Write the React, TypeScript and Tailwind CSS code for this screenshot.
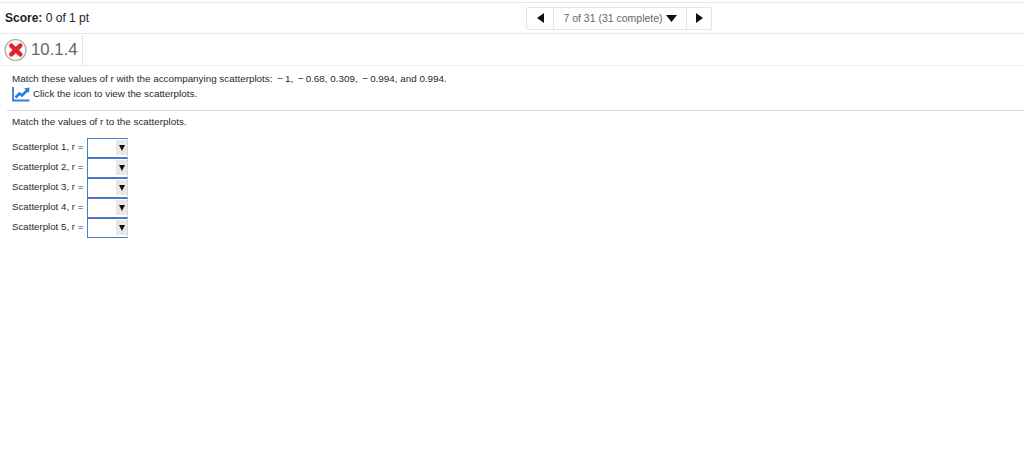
import React from "react";

const plots = [1, 2, 3, 4, 5];

const Triangle = ({ dir }: { dir: "left" | "right" | "down" }) => {
  const points = dir === "left" ? "7,0 7,10 0,5" : dir === "right" ? "0,0 0,10 7,5" : "0,0 11,0 5.5,7";
  const w = dir === "down" ? 11 : 7;
  const h = dir === "down" ? 7 : 10;
  return (
    <svg width={w} height={h} viewBox={`0 0 ${w} ${h}`} className="block">
      <polygon points={points} fill="#111" />
    </svg>
  );
};

const WrongIcon = () => (
  <svg width="23" height="24" viewBox="0 0 23 24" className="block">
    <circle cx="11.5" cy="12" r="10.5" fill="#fbf8f8" stroke="#a8a8a8" strokeWidth="1.2" />
    <path d="M7.3 7.6 L16.3 16.4 M16.3 7.6 L7.3 16.4" stroke="#e0212f" strokeWidth="4.4" strokeLinecap="round" />
  </svg>
);

const ChartIcon = () => (
  <svg width="18" height="15" viewBox="0 0 18 15" className="block">
    <path d="M1 0 V13.5 H17.5" fill="none" stroke="#2a7de1" strokeWidth="1.8" />
    <path d="M3.5 10.5 L7.5 6.5 L10 8.5 L15 3.5" fill="none" stroke="#2a7de1" strokeWidth="2.6" />
    <path d="M12 1.5 L17.5 0.5 L17 6 Z" fill="#2a7de1" />
  </svg>
);

const Minus = () => <span className="mx-[2px]">−</span>;

export default function App() {
  return (
    <div className="h-[456px] w-[1024px] overflow-hidden bg-white pt-[2px] font-['Liberation_Sans',Arial,sans-serif] text-[#333]">
      <header className="flex h-[32px] items-center border-y border-[#e8e8ee] pl-[5px]">
        <div className="w-[521px] text-[12px] text-[#222]">
          <span className="font-bold">Score:</span> 0 of 1 pt
        </div>
        <nav className="flex h-[23px] w-[186px] items-stretch rounded-[2px] border border-[#e4e4e4]">
          <div className="flex w-[27px] items-center justify-center border-r border-[#e4e4e4]">
            <Triangle dir="left" />
          </div>
          <div className="flex flex-1 items-center justify-center gap-[3px] pt-[1px] text-[10.5px] text-[#666]">
            <span>7 of 31 (31 complete)</span>
            <Triangle dir="down" />
          </div>
          <div className="flex w-[25px] items-center justify-center border-l border-[#e4e4e4]">
            <Triangle dir="right" />
          </div>
        </nav>
      </header>

      <div className="flex h-[32px] items-center border-b border-[#eeeeee] pl-[4px]">
        <WrongIcon />
        <div className="ml-[4px] flex h-[30px] items-center border-r border-[#e0e0e0] pr-[4px] text-[16.8px] text-[#666]">
          10.1.4
        </div>
      </div>

      <section className="ml-[7px] border-b border-[#d8d8e8] pb-[8px] pl-[5px] pt-[5px] text-[9.85px] text-[#2a2a2a]">
        <p className="h-[16px] leading-[15px]">
          Match these values of r with the accompanying scatterplots: <Minus />1, <Minus />0.68, 0.309, <Minus />0.994, and 0.994.
        </p>
        <p className="flex h-[15px] items-center gap-[3px]">
          <ChartIcon />
          <span>Click the icon to view the scatterplots.</span>
        </p>
      </section>

      <section className="pl-[12px] pt-[3px] text-[9.85px] text-[#2a2a2a]">
        <p className="h-[15px] leading-[15px]">Match the values of r to the scatterplots.</p>
        <div className="mt-[9px] ml-[-1px] flex flex-col">
          {plots.map((n) => (
            <div key={n} className="flex h-[20px] items-center">
              <span className="w-[76px] pb-[2px] pl-[1px] text-[9.7px]">Scatterplot {n}, r =</span>
              <div className="flex h-[20px] w-[41px] justify-end border border-[#4a78cc] border-r-[#d4d4e4] pt-[1px]">
                <div className="flex h-[15px] w-[11px] items-center justify-center bg-[#e8e8e8]">
                  <svg width="6" height="6" viewBox="0 0 6 6" className="block">
                    <polygon points="0,0 6,0 3,6" fill="#111" />
                  </svg>
                </div>
              </div>
            </div>
          ))}
        </div>
      </section>
    </div>
  );
}
